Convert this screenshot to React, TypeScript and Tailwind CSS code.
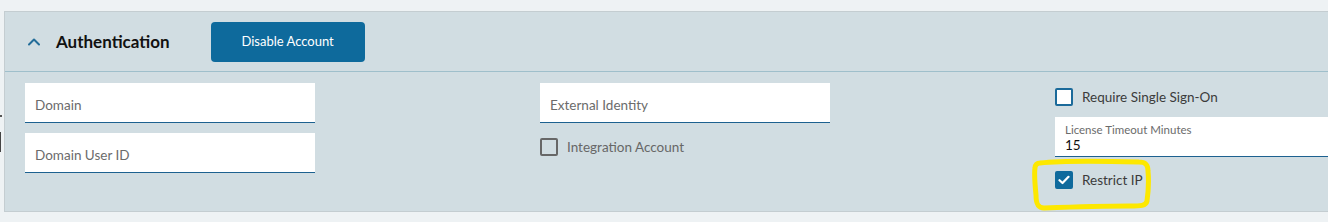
import React from 'react'

const font = { fontFamily: 'Lato, "Noto Sans", sans-serif' }

function TextField({ label, wide }: { label: string; wide?: boolean }) {
  return (
    <div
      className={`${wide ? 'w-[500px]' : 'w-[290px]'} h-[40px] bg-white border-b border-[#1d6190] flex items-center pl-[10px] pt-[5px]`}
    >
      <span className="text-[13.5px] text-[#6b6b6b]">{label}</span>
    </div>
  )
}

function Checkbox({ label, checked, tone }: { label: string; checked?: boolean; tone: 'gray' | 'blue' }) {
  const box = checked
    ? 'bg-[#0f6a9d] border-[#0f6a9d]'
    : tone === 'blue'
      ? 'bg-white border-[#1b6a9a]'
      : 'bg-transparent border-[#676767]'
  return (
    <div className="h-[28px] flex items-center gap-[9px]">
      <span className={`w-[18px] h-[18px] rounded-[2px] border-2 flex items-center justify-center ${box}`}>
        {checked && (
          <svg width="12" height="10" viewBox="0 0 12 10" fill="none">
            <path d="M1.5 5.2 L4.5 8 L10.5 1.8" stroke="white" strokeWidth="2.2" strokeLinecap="round" strokeLinejoin="round" />
          </svg>
        )}
      </span>
      <span className={`text-[13.5px] ${tone === 'gray' ? 'text-[#676767]' : 'text-[#3b3b3b]'}`}>{label}</span>
    </div>
  )
}

export default function App() {
  return (
    <div className="h-[222px] bg-[#eef2f4] pt-[11px] flex overflow-hidden" style={font}>
      <div className="w-[4px] shrink-0 flex flex-col items-start pt-[104px]">
        <span className="w-[2px] h-[2px] bg-[#555]" />
        <span className="mt-[15px] w-[1px] h-[20px] bg-[#444]" />
      </div>
      <div className="flex-1 min-w-0 h-[201px] border border-r-0 border-[#c4cdd1] bg-[#d1dde2] relative">
        <div className="h-[60px] border-b border-[#9fbfcb] flex items-center">
          <svg className="ml-[22px]" width="14" height="10" viewBox="0 0 14 10" fill="none">
            <path d="M2 7.5 L7 2.5 L12 7.5" stroke="#246d99" strokeWidth="2" strokeLinecap="round" strokeLinejoin="round" />
          </svg>
          <span className="ml-[15px] text-[17px] font-bold text-[#111]">Authentication</span>
          <button className="ml-[41px] w-[154px] h-[40px] rounded-[4px] bg-[#0e6a9c] text-white text-[13px]">
            Disable Account
          </button>
        </div>
        <div className="pl-[20px] pt-[11px] grid grid-cols-[515px_515px_515px]">
          <div className="flex flex-col gap-[10px]">
            <TextField label="Domain" />
            <TextField label="Domain User ID" />
          </div>
          <div className="flex flex-col gap-[10px]">
            <TextField label="External Identity" />
            <Checkbox label="Integration Account" tone="gray" />
          </div>
          <div className="flex flex-col">
            <Checkbox label="Require Single Sign-On" tone="blue" />
            <div className="mt-[6px] w-[500px] h-[40px] bg-white border-b border-[#1d6190] pl-[10px] pt-[6px] flex flex-col">
              <span className="text-[11.5px] leading-[14px] text-[#6b6b6b]">License Timeout Minutes</span>
              <span className="text-[13.5px] leading-[17px] text-[#111]">15</span>
            </div>
            <div className="mt-[9px]">
              <Checkbox label="Restrict IP" checked tone="blue" />
            </div>
          </div>
        </div>
        <svg className="absolute left-[1026px] top-[146px] pointer-events-none" width="124" height="54" viewBox="0 0 124 54" fill="none">
          <path
            d="M9 5 C35 2 72 3 108 4 C115 4 117 7 117 13 C118 24 117 36 116 43 C115 48 110 48 98 48 C70 48 40 49 13 50 C7 50 5 46 5 37 C4 27 3 16 4 10 C4 7 6 5 9 5"
            stroke="#fde800"
            strokeWidth="5"
            strokeLinecap="round"
            strokeLinejoin="round"
          />
        </svg>
      </div>
    </div>
  )
}
